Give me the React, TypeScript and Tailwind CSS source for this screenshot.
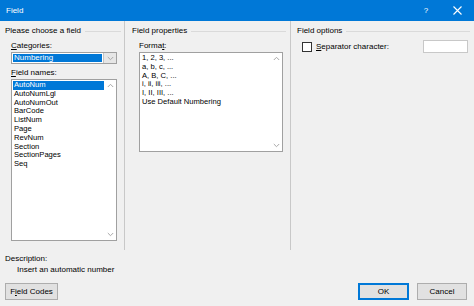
import React from "react";

const FIELD_NAMES = [
  "AutoNum",
  "AutoNumLgl",
  "AutoNumOut",
  "BarCode",
  "ListNum",
  "Page",
  "RevNum",
  "Section",
  "SectionPages",
  "Seq",
];

const FORMATS = [
  "1, 2, 3, ...",
  "a, b, c, ...",
  "A, B, C, ...",
  "i, ii, iii, ...",
  "I, II, III, ...",
  "Use Default Numbering",
];

function Chevron({ up = false }: { up?: boolean }) {
  return (
    <svg width="7" height="5" viewBox="0 0 7 5" className="block">
      <path
        d={up ? "M0.8 4 L3.5 1.3 L6.2 4" : "M0.8 1 L3.5 3.7 L6.2 1"}
        fill="none"
        stroke="#a8a8a8"
        strokeWidth="1"
      />
    </svg>
  );
}

function GroupHeader({ title }: { title: string }) {
  return (
    <div className="flex items-center h-[10px]">
      <span className="whitespace-nowrap">{title}</span>
      <div className="flex-1 h-px bg-[#dadada] ml-[4px]" />
    </div>
  );
}

// Listbox with a thin fake scrollbar on the right
function ListBox({
  items,
  selected,
  className,
}: {
  items: string[];
  selected?: number;
  className: string;
}) {
  return (
    <div className={`flex bg-white border border-[#a0a0a0] ${className}`}>
      <div className="flex-1 pt-px pl-px text-[7.6px]">
        {items.map((item, i) => (
          <div
            key={item}
            className={`h-[8.8px] leading-[8.8px] pl-px whitespace-nowrap ${
              i === selected ? "bg-[#0078d7] text-white" : ""
            }`}
          >
            {item}
          </div>
        ))}
      </div>
      <div className="w-[12px] flex flex-col items-center justify-between py-[3px]">
        <Chevron up />
        <Chevron />
      </div>
    </div>
  );
}

export default function App() {
  return (
    <div
      className="w-[474px] h-[306px] bg-[#f0f0f0] text-[#000] text-[8px] flex flex-col overflow-hidden"
      style={{ fontFamily: '"Liberation Sans", Arial, sans-serif' }}
    >
      {/* title bar */}
      <div className="h-[21px] bg-[#0078d7] text-white flex items-center pl-[6px]">
        <span className="flex-1">Field</span>
        <span className="w-[10px] text-center mr-[22px]">?</span>
        <svg width="9" height="9" viewBox="0 0 9 9" className="mr-[12px]">
          <path d="M0.5 0.5 L8.5 8.5 M8.5 0.5 L0.5 8.5" stroke="#fff" strokeWidth="1.1" />
        </svg>
      </div>

      {/* three panes */}
      <div className="h-[229px] flex">
        <div className="w-[125px] border-r border-[#c8c8c8] pt-[5px] pl-[5px] pr-[3px]">
          <GroupHeader title="Please choose a field" />
          <div className="pl-[6px] pr-[4px]">
            <div className="mt-[5px] h-[10px] leading-[10px]">
              <u>C</u>ategories:
            </div>
            <div className="mt-[1px] h-[12px] bg-white border border-[#a0a0a0] flex items-stretch">
              <div className="flex-1 bg-[#0078d7] text-white leading-[8px] pl-px m-px">
                Numbering
              </div>
              <div className="w-[13px] bg-[#e6e6e6] border-l border-[#c4c4c4] flex items-center justify-center">
                <Chevron />
              </div>
            </div>
            <div className="mt-[4px] h-[10px] leading-[10px]">
              <u>F</u>ield names:
            </div>
            <ListBox items={FIELD_NAMES} selected={0} className="mt-[1px] h-[162px]" />
          </div>
        </div>

        <div className="w-[166px] border-r border-[#c8c8c8] pt-[5px] pl-[7px] pr-[4px]">
          <GroupHeader title="Field properties" />
          <div className="pl-[7px] pr-[3px]">
            <div className="mt-[5px] h-[10px] leading-[10px]">
              Forma<u>t</u>:
            </div>
            <ListBox items={FORMATS} className="mt-[1px] h-[100px]" />
          </div>
        </div>

        <div className="flex-1 pt-[5px] pl-[6px] pr-[4px]">
          <GroupHeader title="Field options" />
          <div className="mt-[4px] flex items-center pl-[5px] pr-[2px]">
            <div className="w-[10px] h-[10px] bg-white border border-[#333]" />
            <span className="ml-[4px] flex-1">
              <u>S</u>eparator character:
            </span>
            <div className="w-[45px] h-[13px] bg-white border border-[#c8c8c8]" />
          </div>
        </div>
      </div>

      {/* description */}
      <div className="pl-[5px] mt-[3px] leading-[11px]">
        <div>Description:</div>
        <div className="pl-[12px]">Insert an automatic number</div>
      </div>

      {/* buttons */}
      <div className="mt-[8px] flex items-center px-[5px]">
        <button className="h-[17px] w-[53px] bg-[#e1e1e1] border border-[#adadad] leading-none">
          F<u>i</u>eld Codes
        </button>
        <div className="flex-1" />
        <button className="h-[17px] w-[51px] bg-[#e1e1e1] border-2 border-[#0078d7] leading-none">
          OK
        </button>
        <button className="ml-[8px] mr-[2px] h-[17px] w-[50px] bg-[#e1e1e1] border border-[#adadad] leading-none">
          Cancel
        </button>
      </div>
    </div>
  );
}
